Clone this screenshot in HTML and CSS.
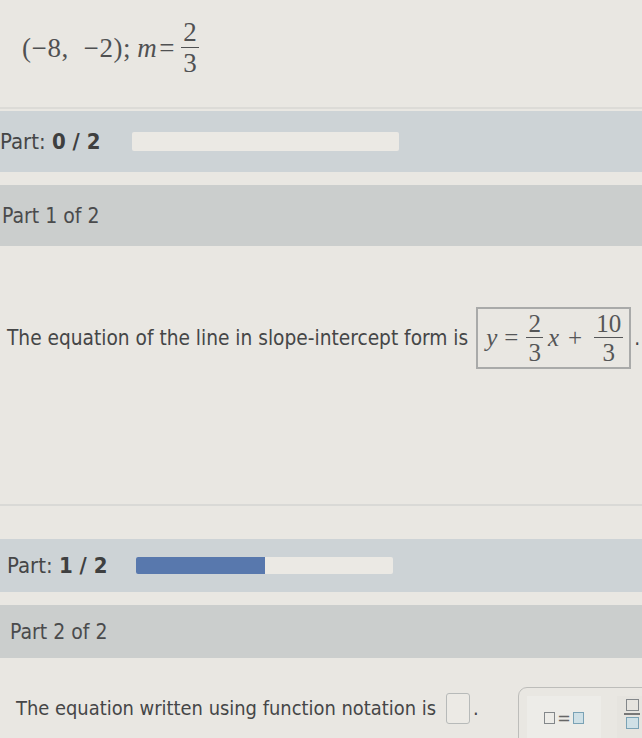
FILE: index.html
```html
<!DOCTYPE html>
<html>
<head>
<meta charset="utf-8">
<link rel="stylesheet" href="styles.css">
</head>
<body>
<div class="page">
  <div class="given">
    <span class="math given-math">(<span class="op">−</span>8, &nbsp;<span class="op">−</span>2); <i>m</i><span class="eq">=</span><span class="frac"><span class="num">2</span><span class="den">3</span></span></span>
  </div>

  <div class="part-bar bar-first">
    <span class="part-label">Part: <b>0 / 2</b></span>
    <div class="progress"><div class="fill" style="width:0%"></div></div>
  </div>

  <div class="part-title">Part 1 of 2</div>

  <div class="content content-one">
    <p class="sentence">The equation of the line in slope-intercept form is
      <span class="answer"><span class="math"><i>y</i> <span class="eq">=</span> <span class="frac"><span class="num">2</span><span class="den">3</span></span><i>x</i> <span class="plus">+</span> <span class="frac"><span class="num">10</span><span class="den">3</span></span></span></span><span class="dot">.</span>
    </p>
  </div>

  <div class="divider"></div>

  <div class="part-bar bar-second">
    <span class="part-label">Part: <b>1 / 2</b></span>
    <div class="progress"><div class="fill" style="width:50%"></div></div>
  </div>

  <div class="part-title title-second">Part 2 of 2</div>

  <div class="content content-two">
    <p class="sentence sentence-two">The equation written using function notation is
      <span class="blank"></span><span class="dot">.</span>
    </p>
    <div class="toolbox">
      <div class="tool tool-eq"><span class="sq"></span><span class="teq">=</span><span class="sq sq-blue"></span></div>
      <div class="tool tool-frac"><span class="sq"></span><span class="fbar"></span><span class="sq sq-blue"></span></div>
    </div>
  </div>
</div>
</body>
</html>
```

FILE: styles.css
```css
html, body {
  margin: 0;
  padding: 0;
}
body {
  background: #e9e7e2;
  width: 642px;
  height: 738px;
  overflow: hidden;
  font-family: "DejaVu Sans Condensed", "DejaVu Sans", sans-serif;
  color: #454647;
}
.page {
  display: flex;
  flex-direction: column;
}
.math {
  font-family: "Liberation Serif", "Times New Roman", serif;
}
.given {
  height: 109px;
  padding-left: 22px;
  box-sizing: border-box;
  display: flex;
  align-items: flex-start;
  padding-top: 19px;
  border-bottom: 2px solid #dcdbd7;
}
.given-math {
  font-size: 27px;
  color: #505152;
  display: inline-flex;
  align-items: center;
  letter-spacing: 0.6px;
}
.given-math i { margin-left: 6px; }
.given-math .eq { margin: 0 4px 0 2px; }
.eq { margin: 0 3px; }
.frac {
  display: inline-flex;
  flex-direction: column;
  align-items: center;
  vertical-align: middle;
  line-height: 1;
  margin: 0 2px;
}
.frac .num {
  padding: 0 2px 1px;
  border-bottom: 1.5px solid currentColor;
}
.frac .den { padding-top: 2px; }

.part-bar {
  height: 61px;
  background: #cdd3d6;
  display: flex;
  align-items: center;
  font-size: 22px;
}
.bar-first {
  margin-top: 2px;
}
.bar-first .progress { margin-left: 32px; width: 267px; height: 19px; }
.part-label b { font-weight: bold; color: #3e3f40; }
.progress {
  height: 18px;
  background: #ebe9e4;
  border-radius: 2px;
  overflow: hidden;
}
.fill {
  height: 100%;
  background: #5878ad;
}
.part-title {
  margin-top: 13px;
  height: 61px;
  background: #cbcecd;
  display: flex;
  align-items: center;
  font-size: 21px;
  padding-left: 2px;
  color: #4a4b4c;
}
.content-one {
  height: 258px;
  box-sizing: border-box;
  padding-top: 61px;
  padding-left: 7px;
}
.sentence {
  margin: 0;
  font-size: 20.7px;
  display: flex;
  align-items: center;
  white-space: nowrap;
}
.answer {
  margin-left: 8px;
  border: 2px solid #a9aaa9;
  height: 62px;
  width: 155px;
  box-sizing: border-box;
  display: inline-flex;
  align-items: center;
  padding-left: 8px;
  font-size: 25px;
  color: #555657;
}
.answer .math {
  display: inline-flex;
  align-items: center;
  gap: 4px;
}
.answer .frac { margin: 0 1px; }
.answer .frac .num { border-bottom-width: 1.5px; }
.plus { margin: 0 7px 0 5px; }
.dot { margin-left: 3px; }
.divider {
  height: 2px;
  background: #d9d9d6;
}
.bar-second {
  margin-top: 33px;
  height: 53px;
  padding-left: 7px;
}
.bar-second .progress { margin-left: 29px; width: 257px; height: 17px; }
.title-second {
  height: 53px;
  padding-left: 10px;
}
.content-two {
  flex: 1;
  position: relative;
  padding-left: 16px;
  padding-top: 35px;
}
.sentence-two { font-size: 19.9px; }
.blank {
  display: inline-block;
  width: 22px;
  height: 29px;
  border: 1.5px solid #b7bab9;
  border-radius: 3px;
  margin-left: 10px;
  background: #eceae5;
}
.toolbox {
  position: absolute;
  left: 518px;
  top: 29px;
  width: 140px;
  height: 70px;
  border: 1.5px solid #bdbdba;
  border-radius: 9px;
  display: flex;
  padding: 8px 0 0 8px;
  box-sizing: border-box;
  gap: 16px;
}
.tool {
  display: flex;
  align-items: center;
  justify-content: center;
  height: 44px;
}
.tool-eq {
  width: 74px;
  gap: 2px;
  background: #edece8;
}
.tool-frac {
  width: 30px;
  flex-direction: column;
  gap: 2px;
  justify-content: flex-start;
  padding-top: 3px;
  background: #e6e4df;
}
.sq {
  width: 11px;
  height: 12px;
  border: 1.5px solid #83878a;
  box-sizing: border-box;
  display: inline-block;
}
.sq-blue {
  border-color: #7aa2b5;
  background: #cfe0e6;
}
.tool-frac .sq { width: 13px; height: 12px; }
.teq { font-size: 18px; color: #666; line-height: 1; }
.fbar { width: 16px; height: 1.5px; background: #777; }
```
